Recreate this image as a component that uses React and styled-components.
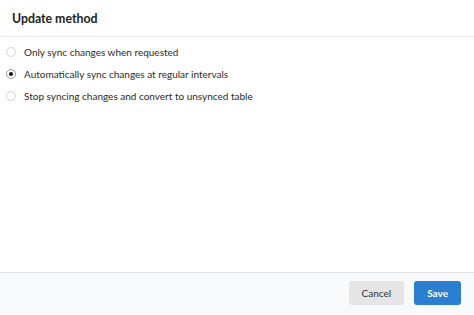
import React, { useState } from 'react';
import styled, { createGlobalStyle } from 'styled-components';

const Global = createGlobalStyle`
html, body {
  margin: 0;
  background: #fff;
}
body {
  font-family: Lato, "Noto Sans", sans-serif;
  color: #333;
}
`;

const Dialog = styled.div`
width: 474px;
height: 313px;
display: flex;
flex-direction: column;
background: #fff;
`;

const Header = styled.div`
height: 36px;
display: flex;
align-items: center;
padding: 0 12px;
border-bottom: 1px solid #e6e6e6;
`;

const Title = styled.h2`
margin: 0;
font-size: 12.3px;
font-weight: 700;
color: #222;
`;

const Body = styled.div`
flex: 1;
padding: 4px 0 0 6px;
display: flex;
flex-direction: column;
`;

const Option = styled.label`
height: 22px;
display: flex;
align-items: center;
gap: 8px;
font-size: 10px;
color: #2b2b2b;
cursor: pointer;
`;

const Radio = styled.span`
width: 10px;
height: 10px;
box-sizing: border-box;
border-radius: 50%;
border: 1px solid ${(p) => (p.$checked ? '#9a9a9a' : '#d4d4d4')};
background: #fff;
display: flex;
align-items: center;
justify-content: center;
&::after {
  content: '';
  width: 4px;
  height: 4px;
  border-radius: 50%;
  background: ${(p) => (p.$checked ? '#111' : 'transparent')};
}
`;

const Footer = styled.div`
height: 41px;
box-sizing: border-box;
border-top: 1px solid #e4e4e4;
background: #f8f9fa;
display: flex;
align-items: center;
justify-content: flex-end;
gap: 10px;
padding: 0 13px 0 0;
`;

const Button = styled.button`
height: 24px;
padding: 0 13px;
border: none;
border-radius: 3px;
font-family: Lato, "Noto Sans", sans-serif;
font-size: 10px;
font-weight: ${(p) => (p.$primary ? 700 : 400)};
background: ${(p) => (p.$primary ? '#2b7fd1' : '#e5e5e5')};
color: ${(p) => (p.$primary ? '#fff' : '#333')};
cursor: pointer;
`;

const options = [
  'Only sync changes when requested',
  'Automatically sync changes at regular intervals',
  'Stop syncing changes and convert to unsynced table',
];

export default function App() {
  const [selected, setSelected] = useState(1);
  return (
    <>
      <Global />
      <Dialog>
        <Header>
          <Title>Update method</Title>
        </Header>
        <Body>
          {options.map((text, i) => (
            <Option key={text} onClick={() => setSelected(i)}>
              <Radio $checked={selected === i} />
              {text}
            </Option>
          ))}
        </Body>
        <Footer>
          <Button>Cancel</Button>
          <Button $primary>Save</Button>
        </Footer>
      </Dialog>
    </>
  );
}
